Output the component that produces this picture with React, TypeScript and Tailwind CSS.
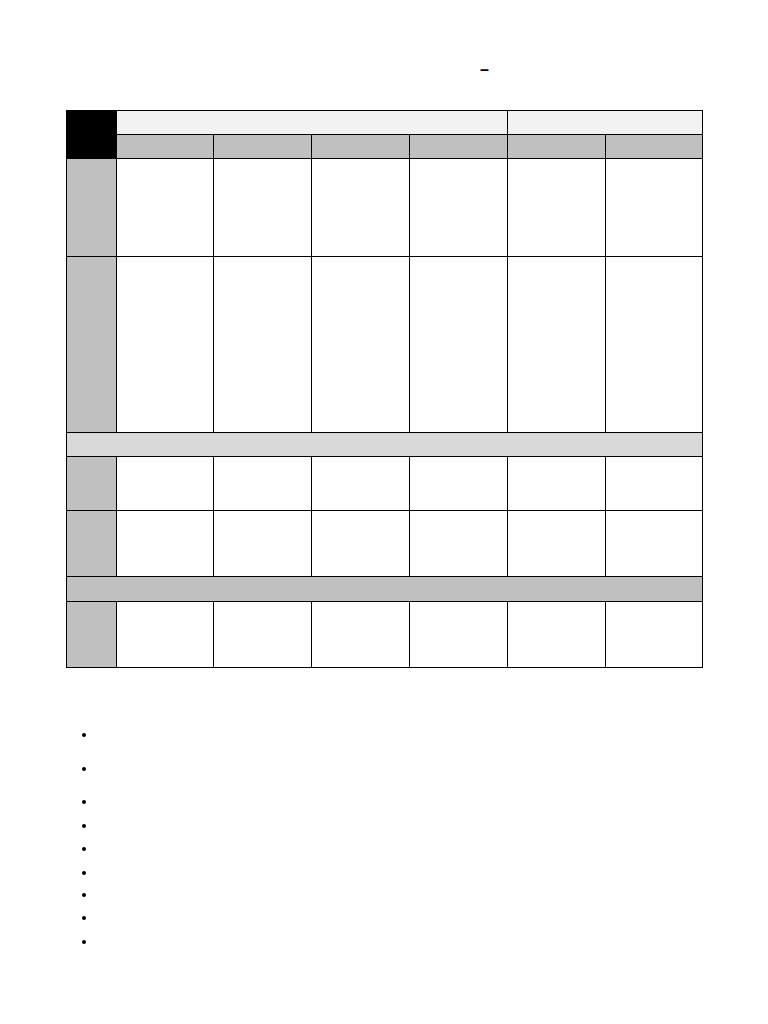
import React from 'react';

const cols = [50, 97, 98, 98, 98, 98, 97];

function BodyRow({ h }: { h: number }) {
  return (
    <tr style={{ height: h }}>
      <td className="border border-black bg-[#c0c0c0]"></td>
      {[0, 1, 2, 3, 4, 5].map((i) => (
        <td key={i} className="border border-black bg-white"></td>
      ))}
    </tr>
  );
}

function SectionRow({ h, tone }: { h: number; tone: string }) {
  return (
    <tr style={{ height: h }}>
      <td colSpan={7} className={`border border-black ${tone}`}></td>
    </tr>
  );
}

const bulletGaps = [0, 34, 33, 24, 23, 24, 22, 23, 24];

export default function App() {
  return (
    <div className="min-h-screen w-full bg-white font-['Liberation_Sans',Arial,sans-serif] text-black">
      <div className="h-[110px] pt-[58px] pl-[480px]">
        <span className="text-[16px] font-bold leading-[20px]">–</span>
      </div>

      <div className="pl-[66px]">
        <table className="table-fixed border-collapse w-[637px]">
          <colgroup>
            {cols.map((w, i) => (
              <col key={i} style={{ width: w }} />
            ))}
          </colgroup>
          <tbody>
            <tr className="h-[24px]">
              <td rowSpan={2} className="border border-black bg-black"></td>
              <td colSpan={4} className="border border-black bg-[#f2f2f2]"></td>
              <td colSpan={2} className="border border-black bg-[#f2f2f2]"></td>
            </tr>
            <tr className="h-[24px]">
              {[0, 1, 2, 3, 4, 5].map((i) => (
                <td key={i} className="border border-black bg-[#c0c0c0]"></td>
              ))}
            </tr>
            <BodyRow h={98} />
            <BodyRow h={176} />
            <SectionRow h={24} tone="bg-[#d9d9d9]" />
            <BodyRow h={54} />
            <BodyRow h={66} />
            <SectionRow h={25} tone="bg-[#c0c0c0]" />
            <BodyRow h={66} />
          </tbody>
        </table>
      </div>

      <ul className="pl-[82px] pt-[65px]">
        {bulletGaps.map((g, i) => (
          <li key={i} className="flex h-[4px] items-center" style={{ marginTop: i === 0 ? 0 : g - 4 }}>
            <span className="block h-[4px] w-[4px] rounded-full bg-black"></span>
          </li>
        ))}
      </ul>
    </div>
  );
}
